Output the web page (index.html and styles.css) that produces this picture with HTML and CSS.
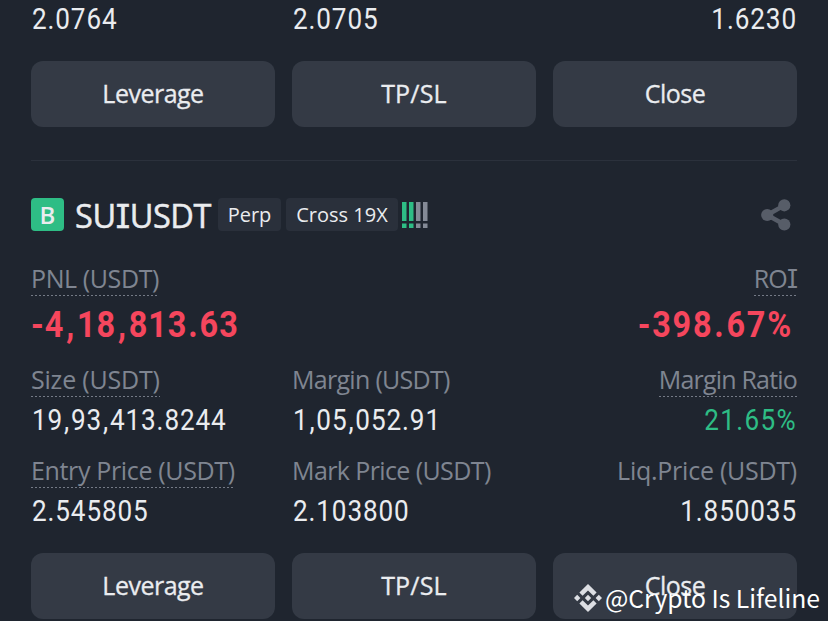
FILE: index.html
```html
<!DOCTYPE html>
<html lang="en">
  <head>
    <meta charset="UTF-8" />
    <meta
      name="viewport"
      content="width=device-width, initial-scale=1.0" />
    <title>Positions</title>
    <link rel="stylesheet" href="styles.css">
  </head>
  <body>
    <main>
      <section class="position">
        <div class="grid topValues">
          <div class="value">2.0764</div>
          <div class="value">2.0705</div>
          <div class="value right">1.6230</div>
        </div>
        <div class="grid controls">
          <button type="button">Leverage</button>
          <button class="wide" type="button">TP/SL</button>
          <button type="button">Close</button>
        </div>
      </section>

      <section class="position second">
        <header>
          <span class="side">B</span>
          <h1>SU<span class="serifI">I</span>USDT</h1>
          <span class="tag perp">Perp</span>
          <span class="tag cross">Cross 19X</span>
          <svg class="bars" width="26" height="26" viewBox="0 0 26 26">
            <g fill="#2ebd85">
              <rect x="0" y="0" width="4.5" height="19" />
              <rect x="0" y="21.5" width="4.5" height="4.5" />
              <rect x="7" y="0" width="4.5" height="19" />
              <rect x="7" y="21.5" width="4.5" height="4.5" />
            </g>
            <g fill="#848a96">
              <rect x="14" y="0" width="4.5" height="19" />
              <rect x="14" y="21.5" width="4.5" height="4.5" />
              <rect x="21" y="0" width="4.5" height="19" />
              <rect x="21" y="21.5" width="4.5" height="4.5" />
            </g>
          </svg>
          <svg class="share" width="30" height="32" viewBox="0 0 30 32">
            <path d="M6.2 16 L23.3 6.3 M6.2 16 L23.3 25.5" stroke="#575d68" stroke-width="4.4" />
            <g fill="#575d68">
              <circle cx="6.2" cy="16" r="6.1" />
              <circle cx="23.3" cy="6.3" r="6.1" />
              <circle cx="23.3" cy="25.5" r="6.1" />
            </g>
          </svg>
        </header>

        <div class="pnl">
          <div>
            <span class="label dotted pnlLabel">PNL (USDT)</span>
            <div class="big">-4<span class="sep">,</span>18<span class="sep">,</span>813<span class="dot">.</span>63</div>
          </div>
          <div class="right">
            <span class="label dotted roiLabel">RO<span class="serifI">I</span></span>
            <div class="big roi">-398<span class="dot">.</span>67%</div>
          </div>
        </div>

        <div class="grid cells">
          <div>
            <span class="label dotted sizeLabel">Size (USDT)</span>
            <div class="value">19<span class="sep">,</span>93<span class="sep">,</span>413.8244</div>
          </div>
          <div>
            <span class="label marginLabel">Margin (USDT)</span>
            <div class="value">1<span class="sep">,</span>05<span class="sep">,</span>052.91</div>
          </div>
          <div class="right">
            <span class="label dotted ratioLabel">Margin Ratio</span>
            <div class="value green">21.65%</div>
          </div>
          <div>
            <span class="label dotted entryLabel">Entry Price (USDT)</span>
            <div class="value">2.545805</div>
          </div>
          <div>
            <span class="label markLabel">Mark Price (USDT)</span>
            <div class="value">2.103800</div>
          </div>
          <div class="right">
            <span class="label liqLabel">Liq.Price (USDT)</span>
            <div class="value">1.850035</div>
          </div>
        </div>

        <div class="grid controls">
          <button type="button">Leverage</button>
          <button class="wide" type="button">TP/SL</button>
          <button type="button">Close</button>
        </div>
      </section>
    </main>

    <div class="watermark">
      <svg width="28" height="28" viewBox="0 0 28 28" fill="#dcdee3">
        <path d="M14 0 L22.6 8.6 L19.4 11.8 L14 6.4 L8.6 11.8 L5.4 8.6 Z" />
        <path d="M14 28 L22.6 19.4 L19.4 16.2 L14 21.6 L8.6 16.2 L5.4 19.4 Z" />
        <path d="M14 10.8 L17.2 14 L14 17.2 L10.8 14 Z" />
        <path d="M3.2 10.8 L6.4 14 L3.2 17.2 L0 14 Z" />
        <path d="M24.8 10.8 L28 14 L24.8 17.2 L21.6 14 Z" />
      </svg>
      <span>@Crypto Is Lifeline</span>
    </div>
  </body>
</html>
```
FILE: styles.css
```css
* {
  box-sizing: border-box;
}
body {
  margin: 0;
  height: 621px;
  overflow: hidden;
  background-color: #1f252f;
  color: #eaecef;
  font-family: 'Open Sans', 'Noto Sans', sans-serif;
}
main {
  padding: 0 31px;
}
.grid {
  display: grid;
  grid-template-columns: repeat(3, 244px);
  column-gap: 17px;
}
.right {
  text-align: right;
}
.topValues {
  padding-top: 2px;
}
.value {
  font-family: Roboto, sans-serif;
  font-size: 29px;
  line-height: 34px;
  letter-spacing: 1px;
  text-indent: 1px;
  white-space: nowrap;
  transform: scaleX(0.9);
  transform-origin: left;
}
.right .value,
.value.right {
  transform-origin: right;
}
.sep {
  padding: 0 1px;
}
.green {
  color: #2ebd85;
  letter-spacing: 1.5px;
}
.controls {
  padding-top: 25px;
}
.second .controls {
  padding-top: 24px;
}
button {
  height: 66px;
  padding: 0 0 2px;
  border: none;
  border-radius: 12px;
  background-color: #343a45;
  color: #eaecef;
  font-family: 'Open Sans', 'Noto Sans', sans-serif;
  font-size: 25px;
  font-weight: 500;
  letter-spacing: -0.5px;
  -webkit-text-stroke: 0.3px #eaecef;
}
.wide {
  letter-spacing: 0.2px;
}
.second {
  margin-top: 33px;
  border-top: 1px solid #2b313c;
}
header {
  display: flex;
  align-items: center;
  height: 33px;
  margin-top: 37px;
}
.side {
  width: 33px;
  height: 33px;
  border-radius: 4px;
  background-color: #2ebd85;
  font-size: 24px;
  font-weight: 600;
  line-height: 33px;
  text-align: center;
}
h1 {
  width: 143px;
  margin: 0 0 0 11px;
  padding-top: 2px;
  font-size: 32.5px;
  font-weight: 500;
  line-height: 33px;
  letter-spacing: -0.4px;
  white-space: nowrap;
  -webkit-text-stroke: 0.5px #eaecef;
}
.serifI {
  font-family: Inter, sans-serif;
  font-feature-settings: 'cv08';
}
h1 .serifI {
  font-weight: 400;
}
.tag {
  height: 33px;
  border-radius: 4px;
  background-color: #2a303b;
  font-size: 20px;
  line-height: 34px;
  text-align: center;
}
.perp {
  width: 63px;
}
.cross {
  width: 112px;
  margin-left: 5px;
}
.bars {
  margin-left: 4px;
}
.share {
  margin-left: auto;
  margin-right: 6px;
}
.pnl {
  display: flex;
  justify-content: space-between;
  margin-top: 33px;
  height: 101px;
}
.label {
  display: inline-block;
  height: 32px;
  color: #7f8591;
  font-size: 25px;
  line-height: 29px;
  white-space: nowrap;
  vertical-align: top;
}
.dotted {
  background: repeating-linear-gradient(to right, #747a86 0 2px, transparent 2px 4px) left bottom / 100% 1px no-repeat;
}
.pnlLabel {
  letter-spacing: -0.4px;
}
.roiLabel {
  letter-spacing: -0.9px;
}
.sizeLabel {
  letter-spacing: -0.2px;
}
.entryLabel {
  letter-spacing: -0.35px;
}
.marginLabel {
  letter-spacing: -0.7px;
}
.markLabel {
  letter-spacing: -0.6px;
}
.ratioLabel {
  letter-spacing: -0.8px;
}
.liqLabel {
  letter-spacing: -0.25px;
}
.big {
  color: #f5465d;
  font-family: Roboto, sans-serif;
  font-size: 36px;
  font-weight: 700;
  line-height: 42px;
  letter-spacing: 1.1px;
  white-space: nowrap;
  padding-top: 8px;
  transform: scaleX(0.9);
  transform-origin: left;
}
.big .sep {
  padding: 0 2px;
}
.dot {
  padding: 0 1px;
}
.roi {
  letter-spacing: 2px;
  padding-right: 4px;
  transform-origin: right;
}
.cells {
  row-gap: 18px;
}
.cells > div {
  height: 73px;
}
.cells .value {
  padding-top: 6px;
}
.watermark {
  position: absolute;
  left: 574px;
  top: 579px;
  display: flex;
  align-items: center;
  gap: 3px;
  color: #fff;
  font-family: 'Noto Sans CJK SC', sans-serif;
  font-size: 24.7px;
  line-height: 36px;
  white-space: nowrap;
}
.watermark span {
  padding-bottom: 2px;
}
```
